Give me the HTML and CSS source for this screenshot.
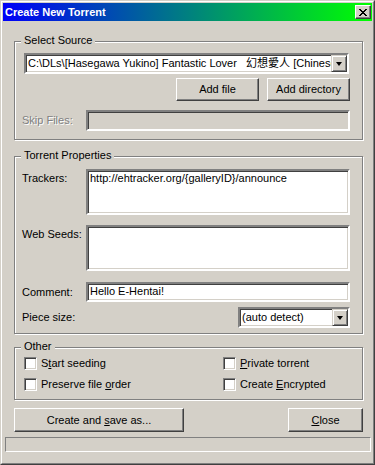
FILE: index.html
```html
<!DOCTYPE html>
<html>
<head>
<meta charset="utf-8">
<title>Create New Torrent</title>
<link rel="stylesheet" href="styles.css">
</head>
<body>
<div class="window">
  <div class="frame">
    <div class="titlebar">
      <span class="title">Create New Torrent</span>
      <div class="title-close">
        <svg width="8" height="7" viewBox="0 0 8 7" shape-rendering="crispEdges">
          <path d="M0 0h2v1H0zM6 0h2v1H6zM1 1h2v1H1zM5 1h2v1H5zM2 2h4v1H2zM3 3h2v1H3zM2 4h4v1H2zM1 5h2v1H1zM5 5h2v1H5zM0 6h2v1H0zM6 6h2v1H6z" fill="#000"/>
        </svg>
      </div>
    </div>

    <div class="content">
      <div class="group group-source">
        <div class="group-title">Select Source</div>
        <div class="combo combo-source">
          <div class="combo-text">C:\DLs\[Hasegawa Yukino] Fantastic Lover&nbsp;&nbsp; 幻想愛人 [Chinese]</div>
          <div class="combo-btn"><span class="arrow"></span></div>
        </div>
        <div class="btn-row">
          <div class="btn btn-add"><span>Add file</span></div>
          <div class="btn btn-add"><span>Add directory</span></div>
        </div>
        <div class="field-row skip-row">
          <div class="label disabled">Skip Files:</div>
          <div class="textbox textbox-disabled"></div>
        </div>
      </div>

      <div class="group group-props">
        <div class="group-title">Torrent Properties</div>
        <div class="field-row area-row trackers-row">
          <div class="label label-top">Trackers:</div>
          <div class="textbox textarea">http://ehtracker.org/{galleryID}/announce</div>
        </div>
        <div class="field-row area-row seeds-row">
          <div class="label label-top">Web Seeds:</div>
          <div class="textbox textarea"></div>
        </div>
        <div class="field-row comment-row">
          <div class="label">Comment:</div>
          <div class="textbox textbox-line">Hello E-Hentai!</div>
        </div>
        <div class="field-row piece-row">
          <div class="label label-grow">Piece size:</div>
          <div class="combo combo-piece">
            <div class="combo-text">(auto detect)</div>
            <div class="combo-btn"><span class="arrow"></span></div>
          </div>
        </div>
      </div>

      <div class="group group-other">
        <div class="group-title">Other</div>
        <div class="check-grid">
          <div class="check"><span class="check-box"></span><span>S<u>t</u>art seeding</span></div>
          <div class="check"><span class="check-box"></span><span><u>P</u>rivate torrent</span></div>
          <div class="check"><span class="check-box"></span><span>Preserve file <u>o</u>rder</span></div>
          <div class="check"><span class="check-box"></span><span>Create <u>E</u>ncrypted</span></div>
        </div>
      </div>

      <div class="action-row">
        <div class="btn btn-create"><span>Create and <u>s</u>ave as...</span></div>
        <div class="btn btn-close"><span><u>C</u>lose</span></div>
      </div>
    </div>

    <div class="statusbar"></div>
  </div>
</div>
</body>
</html>
```
FILE: styles.css
```css
* {
  box-sizing: border-box;
}

html, body {
  margin: 0;
  padding: 0;
  background: #d4d0c8;
}

body {
  font-family: "Liberation Sans", "Noto Sans CJK TC", sans-serif;
  font-size: 11px;
  line-height: 13px;
  color: #000;
}

.window {
  width: 375px;
  height: 465px;
  background: #d4d0c8;
  border: 1px solid;
  border-color: #d4d0c8 #404040 #404040 #d4d0c8;
}

.frame {
  height: 100%;
  border: 1px solid;
  border-color: #ffffff #808080 #808080 #ffffff;
  padding: 1px;
  display: flex;
  flex-direction: column;
}

.titlebar {
  height: 18px;
  flex: none;
  background: linear-gradient(to right, #0000f8, #008080 50%, #00ff00);
  display: flex;
  align-items: center;
  justify-content: space-between;
  padding: 0 1px 0 2px;
}

.title {
  color: #fff;
  font-weight: bold;
  font-size: 11px;
  line-height: 13px;
  white-space: nowrap;
}

.title-close {
  width: 16px;
  height: 14px;
  background: #d4d0c8;
  border: 1px solid;
  border-color: #ffffff #404040 #404040 #ffffff;
  box-shadow: inset -1px -1px 0 #808080;
  display: flex;
  align-items: center;
  justify-content: center;
  padding-right: 1px;
}

.title-close svg {
  display: block;
}

.content {
  padding: 0 9px 0 11px;
  display: flex;
  flex-direction: column;
}

/* Group boxes */
.group {
  border: 1px solid #808080;
  box-shadow: inset 1px 1px 0 #ffffff, 1px 1px 0 #ffffff;
  padding: 0 12px 0 7px;
  display: flex;
  flex-direction: column;
}

.group-title {
  margin: -8px 0 0 -1px;
  padding: 0 3px 0 3px;
  height: 13px;
  width: max-content;
  background: #d4d0c8;
  white-space: nowrap;
}

.group-source {
  margin-top: 20px;
  padding-bottom: 8px;
}

.group-props {
  margin-top: 16px;
  padding-bottom: 5px;
}

.group-other {
  margin-top: 13px;
  padding-bottom: 8px;
}

/* Sunken controls */
.combo,
.textbox {
  background: #fff;
  border: 2px solid;
  border-color: #808080 #ffffff #ffffff #808080;
  box-shadow: inset 1px 1px 0 #404040, inset -1px -1px 0 #d4d0c8;
}

.combo {
  display: flex;
  height: 21px;
  padding: 1px;
}

.combo-text {
  flex: 1;
  min-width: 0;
  overflow: hidden;
  white-space: nowrap;
  padding: 1px 0 0 1px;
}

.combo-btn {
  flex: none;
  width: 16px;
  margin: -1px -1px -1px 0;
  background: #d4d0c8;
  border: 1px solid;
  border-color: #d4d0c8 #404040 #404040 #d4d0c8;
  box-shadow: inset 1px 1px 0 #ffffff, inset -1px -1px 0 #808080;
  display: flex;
  align-items: center;
  justify-content: center;
  height: 17px;
}

.arrow {
  width: 0;
  height: 0;
  border-left: 3.5px solid transparent;
  border-right: 3.5px solid transparent;
  border-top: 4px solid #000;
}

.combo-source {
  margin: 6px 1px 0 2px;
}

/* Buttons */
.btn {
  height: 23px;
  background: #d4d0c8;
  border: 1px solid;
  border-color: #ffffff #404040 #404040 #ffffff;
  box-shadow: inset -1px -1px 0 #808080;
  display: flex;
  align-items: center;
  justify-content: center;
  white-space: nowrap;
}

.btn-row {
  margin-top: 4px;
  display: flex;
  justify-content: flex-end;
  gap: 8px;
}

.btn-add {
  width: 83px;
}

/* Field rows */
.field-row {
  display: flex;
  align-items: center;
}

.label {
  width: 64px;
  flex: none;
  white-space: nowrap;
}

.label-grow {
  flex: 1;
}

.label-top {
  align-self: flex-start;
  margin-top: 3px;
}

.disabled {
  color: #808080;
  text-shadow: 1px 1px 0 #ffffff;
}

.skip-row {
  margin-top: 9px;
}

.textbox {
  flex: 1;
  min-width: 0;
  white-space: nowrap;
  overflow: hidden;
}

.textbox-disabled {
  height: 21px;
  background: #d4d0c8;
}

.textarea {
  height: 46px;
  padding: 1px 2px;
}

.textbox-line {
  height: 20px;
  padding: 1px 2px;
}

.trackers-row {
  margin-top: 7px;
}

.seeds-row {
  margin-top: 10px;
}

.comment-row {
  margin-top: 11px;
}

.piece-row {
  margin-top: 5px;
}

.combo-piece {
  width: 112px;
  flex: none;
}

/* Checkboxes */
.check-grid {
  margin-top: 4px;
  padding-left: 2px;
  display: grid;
  grid-template-columns: 199px 1fr;
  row-gap: 8px;
}

.check {
  display: flex;
  align-items: center;
  gap: 4px;
  height: 13px;
  white-space: nowrap;
}

.check-box {
  width: 13px;
  height: 13px;
  flex: none;
  background: #fff;
  border: 1px solid;
  border-color: #808080 #ffffff #ffffff #808080;
  box-shadow: inset 1px 1px 0 #404040, inset -1px -1px 0 #d4d0c8;
}

/* Action buttons */
.action-row {
  margin-top: 8px;
  display: flex;
  justify-content: space-between;
}

.action-row .btn {
  height: 24px;
}

.btn-create {
  width: 170px;
}

.btn-close {
  width: 75px;
}

/* Status bar */
.statusbar {
  margin: 5px 1px 0 2px;
  height: 15px;
  border: 1px solid;
  border-color: #808080 #ffffff #ffffff #808080;
}
```
